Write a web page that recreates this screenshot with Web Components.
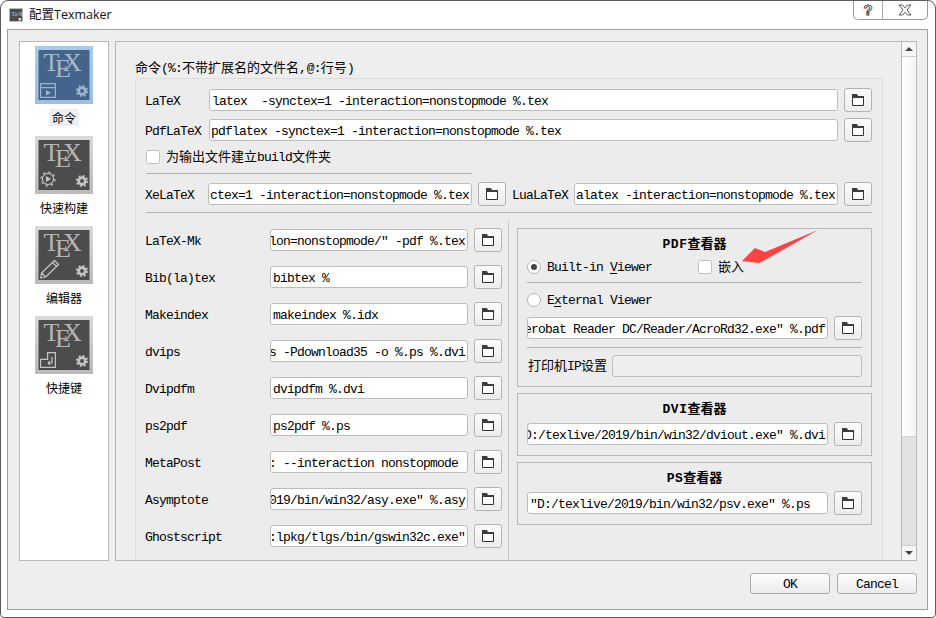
<!DOCTYPE html>
<html lang="zh">
<head>
<meta charset="utf-8">
<title>配置Texmaker</title>
<style>
  html, body { margin: 0; padding: 0; background: #fff; }
  body { width: 936px; height: 618px; overflow: hidden; font: 13px "Liberation Mono", "Noto Sans CJK SC", monospace; letter-spacing: -0.8px; color: #000; }
  u { text-underline-offset: 2px; }
</style>
</head>
<body>
<tm-window>
  <tm-titlebar slot="title">配置Texmaker</tm-titlebar>

  <tm-nav slot="nav" kind="run" selected>命令</tm-nav>
  <tm-nav slot="nav" kind="build">快速构建</tm-nav>
  <tm-nav slot="nav" kind="edit">编辑器</tm-nav>
  <tm-nav slot="nav" kind="keys">快捷键</tm-nav>

  <tm-page slot="page">
    <span slot="caption"><tm-cjk>命令</tm-cjk>(%:<tm-cjk>不带扩展名的文件名,</tm-cjk>@:<tm-cjk>行号</tm-cjk>)</span>

    <tm-field style="--label-w:64px"><span slot="label">LaTeX</span><span slot="lead">latex  -synctex=1 -interaction=nonstopmode %.tex</span></tm-field>
    <tm-field style="--label-w:64px;margin-top:6px" flush><span slot="label">PdfLaTeX</span><span slot="lead">pdflatex -synctex=1 -interaction=nonstopmode %.tex</span></tm-field>
    <tm-check style="margin:6px 0 0 1px"><tm-cjk>为输出文件建立</tm-cjk>build<tm-cjk>文件夹</tm-cjk></tm-check>
    <tm-rule style="width:326px;margin:7px 0 8px 1px"></tm-rule>
    <tm-pair>
      <tm-field slot="a" style="--label-w:63px" flush><span slot="label">XeLaTeX</span><span slot="lead">ctex=1 -interaction=nonstopmode %.tex</span></tm-field>
      <tm-field slot="b" style="--label-w:62px" flush><span slot="label">LuaLaTeX</span><span slot="lead">alatex -interaction=nonstopmode %.tex</span></tm-field>
    </tm-pair>
    <tm-rule style="margin:6px 0 8px 1px"></tm-rule>

    <tm-columns>
      <tm-field slot="left"><span slot="label">LaTeX-Mk</span><span slot="tail">lon=nonstopmode/" -pdf %.tex</span></tm-field>
      <tm-field slot="left"><span slot="label">Bib(la)tex</span><span slot="lead">bibtex %</span></tm-field>
      <tm-field slot="left"><span slot="label">Makeindex</span><span slot="lead">makeindex %.idx</span></tm-field>
      <tm-field slot="left"><span slot="label">dvips</span><span slot="tail">s -Pdownload35 -o %.ps %.dvi</span></tm-field>
      <tm-field slot="left"><span slot="label">Dvipdfm</span><span slot="lead">dvipdfm %.dvi</span></tm-field>
      <tm-field slot="left"><span slot="label">ps2pdf</span><span slot="lead">ps2pdf %.ps</span></tm-field>
      <tm-field slot="left"><span slot="label">MetaPost</span><span slot="tail">: --interaction nonstopmode </span></tm-field>
      <tm-field slot="left"><span slot="label">Asymptote</span><span slot="tail">019/bin/win32/asy.exe" %.asy</span></tm-field>
      <tm-field slot="left"><span slot="label">Ghostscript</span><span slot="tail">:lpkg/tlgs/bin/gswin32c.exe"</span></tm-field>

      <tm-group slot="right">
        <span slot="title">PDF<tm-cjk>查看器</tm-cjk></span>
        <tm-pair style="--a:171px;--gap:0px;margin-top:6px">
          <tm-radio slot="a" checked>Built-in <u>V</u>iewer</tm-radio>
          <tm-check slot="b"><tm-cjk>嵌入</tm-cjk></tm-check>
        </tm-pair>
        <tm-rule style="margin:6px 0 8px"></tm-rule>
        <tm-radio>E<u>x</u>ternal Viewer</tm-radio>
        <tm-field style="--label-w:0px;margin-top:7px"><span slot="tail">erobat Reader DC/Reader/AcroRd32.exe" %.pdf</span></tm-field>
        <tm-rule style="margin:7px 0"></tm-rule>
        <tm-printer><tm-cjk>打印机</tm-cjk>IP<tm-cjk>设置</tm-cjk></tm-printer>
      </tm-group>
      <tm-group slot="right">
        <span slot="title">DVI<tm-cjk>查看器</tm-cjk></span>
        <tm-field style="--label-w:0px"><span slot="tail">D:/texlive/2019/bin/win32/dviout.exe" %.dvi</span></tm-field>
      </tm-group>
      <tm-group slot="right">
        <span slot="title">PS<tm-cjk>查看器</tm-cjk></span>
        <tm-field style="--label-w:0px"><span slot="lead">"D:/texlive/2019/bin/win32/psv.exe" %.ps</span></tm-field>
      </tm-group>
    </tm-columns>
  </tm-page>

  <tm-button slot="actions">OK</tm-button>
  <tm-button slot="actions">Cancel</tm-button>
</tm-window>

<script>
function define(name, css, html, extra) {
  const template = document.createElement("template");
  template.innerHTML = `<style>${css}</style>${html}`;
  customElements.define(name, class extends HTMLElement {
    constructor() {
      super();
      this.attachShadow({ mode: "open" });
      this.shadowRoot.appendChild(template.content.cloneNode(true));
    }
    connectedCallback() {
      if (extra) extra(this);
    }
  });
}

define("tm-cjk", `:host { display: inline; font-size: 13px; letter-spacing: 0; line-height: 1; }`, `<slot></slot>`);

define("tm-window", `
  :host { display: block; position: relative; box-sizing: border-box; width: 936px; height: 618px;
    border: 1px solid #5c5c5c; border-radius: 8px 8px 4px 4px; background: #fff; overflow: hidden; }
  .frame { box-sizing: border-box; position: absolute; left: 6px; right: 7px; top: 28px; bottom: 7px;
    border: 1px solid #a0a0a0; background: #eeeeee; padding: 11px 10px 15px 11px;
    display: flex; flex-direction: column; gap: 12px; }
  .main { display: flex; gap: 6px; height: 520px; }
  .nav { box-sizing: border-box; width: 90px; background: #fff; border: 1px solid #b9b9b9; padding-top: 4px; }
  .page { flex: 1; min-width: 0; }
  .actions { display: flex; justify-content: flex-end; gap: 7px; }
  .arrow { position: absolute; left: -1px; top: -1px; pointer-events: none; }
`, `
  <slot name="title"></slot>
  <div class="frame">
    <div class="main">
      <div class="nav"><slot name="nav"></slot></div>
      <div class="page"><slot name="page"></slot></div>
    </div>
    <div class="actions"><slot name="actions"></slot></div>
  </div>
  <svg class="arrow" width="936" height="618"><polygon fill="#ff4141" points="742,261 755,248 765,252 818,230 772,256 759,263"/></svg>
`);

define("tm-titlebar", `
  :host { display: flex; align-items: flex-start; height: 28px; font: 12.5px "Open Sans", "Noto Sans CJK SC", sans-serif; letter-spacing: 0; color: #111; }
  .ico { margin: 7px 6px 0 8px; flex: none; }
  .txt { margin-top: 5px; line-height: 18px; flex: 1; }
  .btns { display: flex; box-sizing: border-box; width: 75px; height: 19px; margin: 0 7px 0 0; border: 1px solid #999; border-top: 0; border-radius: 0 0 5px 5px; }
  .btns div { display: flex; align-items: center; justify-content: center; }
  .help { width: 28px; border-right: 1px solid #aaa; }
  .close { flex: 1; }
`, `
  <svg class="ico" width="14" height="14" viewBox="0 0 14 14">
    <rect width="14" height="14" fill="#bcbcbc"/><rect x="1" y="1" width="12" height="12" fill="#4a4a4a"/>
    <text x="2" y="8" font-family="Liberation Serif" font-size="7" fill="#c8c8c8">TeX</text>
    <rect x="9.5" y="10" width="2.5" height="2.5" fill="#ddd"/>
  </svg>
  <div class="txt"><slot></slot></div>
  <div class="btns">
    <div class="help"><svg width="14" height="16" viewBox="0 0 14 16"><text x="7" y="13" text-anchor="middle" font-family="Liberation Sans" font-weight="700" font-size="15" fill="#fff" stroke="#444" stroke-width=".9">?</text></svg></div>
    <div class="close"><svg width="14" height="12" viewBox="0 0 14 12"><polygon fill="#fff" stroke="#555" points="1,1 4.5,1 7,3.8 9.5,1 13,1 9,6 13,11 9.5,11 7,8.2 4.5,11 1,11 5,6"/></svg></div>
  </div>
`);

const gear = c => `<circle cx="47" cy="45" r="3.3" fill="none" stroke="${c}" stroke-width="2.7"/><circle cx="47" cy="45" r="5.2" fill="none" stroke="${c}" stroke-width="1.8" stroke-dasharray="2 2.08"/>`;
const marks = {
  run: c => `<path fill="none" stroke="${c}" stroke-width="1.2" d="M5.6 37.6h14.8v13.8H5.6zM5.6 41.6h14.8"/><path fill="${c}" d="M11 44l5 2.8-5 2.8z"/>`,
  build: c => `<circle cx="13" cy="43" r="5.6" fill="none" stroke="${c}" stroke-width="1.1"/><circle cx="13" cy="43" r="7" fill="none" stroke="${c}" stroke-width="1.2" stroke-dasharray="2.4 3.1"/><path fill="${c}" d="M11 40l5 3-5 3z"/>`,
  edit: c => `<path fill="none" stroke="${c}" stroke-width="1.2" stroke-linejoin="round" d="M5.6 52l1-5L19.5 34.500l4 4L10.700 51zM6.800 47l4 4M17.500 36.500l4 4"/>`,
  keys: c => `<path fill="none" stroke="${c}" stroke-width="1.2" d="M12.600 36.600h7.800v14.800H5.600v-8h7zM13 47h4v-6M13 47l2-1.800M13 47l2 1.800"/>`
};

define("tm-nav", `
  :host { display: flex; flex-direction: column; align-items: center; height: 90px; font: 12px "Noto Sans CJK SC", sans-serif; letter-spacing: 0; }
  svg { display: block; flex: none; }
  .lbl { margin-top: 5px; height: 17px; line-height: 17px; padding: 0 3px; }
  :host([selected]) .lbl { background: #eeeeee; }
`, `<svg width="58" height="58" viewBox="0 0 58 58"></svg><div class="lbl"><slot></slot></div>`, el => {
  const on = el.hasAttribute("selected");
  const ink = on ? "#9db4cc" : "#c4c4c4";
  const letters = on ? "#a4b8cd" : "#b4b4b4";
  const id = "g" + el.getAttribute("kind");
  el.shadowRoot.querySelector("svg").innerHTML = `
    <defs><linearGradient id="${id}" x1="0" y1="0" x2="0" y2="1">
      <stop offset="0" stop-color="${on ? "#a9cbee" : "#d9dad9"}"/><stop offset="1" stop-color="${on ? "#9cbfe2" : "#b9bab9"}"/>
    </linearGradient></defs>
    <rect width="58" height="58" fill="url(#${id})"/>
    <rect x="3.500" y="4" width="51" height="50" fill="${on ? "#43658b" : "#4c4c4c"}"/>
    <text x="8.500 20 28" y="25 31 25" font-family="Liberation Serif" font-size="26" fill="${letters}">TEX</text>
    ${marks[el.getAttribute("kind")](ink)}${gear(ink)}`;
});

define("tm-page", `
  :host { display: flex; box-sizing: border-box; height: 520px; border: 1px solid #b5b5b5; border-right: 0; background: #eeeeee; overflow: hidden; }
  .view { flex: 1; min-width: 0; box-sizing: border-box; padding: 0 18px 0 19px; }
  .caption { height: 36px; box-sizing: border-box; padding-top: 17px; line-height: 19px; }
  .box { box-sizing: border-box; height: 600px; border: 1px solid #dcdcdc; border-radius: 2px; background: #ececec; padding: 9px 10px 0 9px; }
  .bar { box-sizing: border-box; width: 16px; flex: none; display: flex; flex-direction: column; border-left: 1px solid #b9b9b9; border-right: 1px solid #b9b9b9; background: #e2e2e2; }
  .end { height: 14px; flex: none; background: #f6f6f6; display: flex; align-items: center; justify-content: center; }
  .end.up { border-bottom: 1px solid #cfcfcf; }
  .end.down { border-top: 1px solid #cfcfcf; }
  .thumb { height: 379px; flex: none; background: linear-gradient(90deg, #fff, #f4f4f4); border-bottom: 1px solid #d4d4d4; }
  .rest { flex: 1; }
  i { width: 0; height: 0; border: 4px solid transparent; }
  .up i { border-bottom: 4px solid #444; border-top: 0; }
  .down i { border-top: 4px solid #444; border-bottom: 0; }
`, `
  <div class="view">
    <div class="caption"><slot name="caption"></slot></div>
    <div class="box"><slot></slot></div>
  </div>
  <div class="bar">
    <div class="end up"><i></i></div><div class="thumb"></div><div class="rest"></div><div class="end down"><i></i></div>
  </div>
`);

define("tm-browse", `
  :host { display: flex; flex: none; align-items: center; justify-content: center; box-sizing: border-box; width: 28px; height: 24px;
    border: 1px solid #b3b3b3; border-radius: 3px; background: linear-gradient(#fbfbfb, #ececec); }
`, `<svg width="12" height="12" viewBox="0 0 12 12"><path fill="#fff" stroke="#333" d="M.5 2.500h11v9H.5z"/><path fill="#3c3c3c" d="M0 0h5l1 2h6v2H0z"/></svg>`);

define("tm-field", `
  :host { display: flex; align-items: center; height: 24px; line-height: 15px; }
  .lbl { flex: none; width: var(--label-w, 125px); white-space: pre; padding-top: 2px; }
  .box { flex: 1; min-width: 0; box-sizing: border-box; height: 22px; margin-right: 6px; display: flex; align-items: center; overflow: hidden;
    padding: 2px 2px 0; border: 1px solid #bdbdbd; border-radius: 3px; background: #fff; white-space: pre; }
  :host([flush]) .box { padding: 2px 1px 0; }
  .box.tail { justify-content: flex-end; }
  .box span { flex: none; }
`, `
  <div class="lbl"><slot name="label"></slot></div>
  <div class="box"><span><slot name="lead"></slot></span><span><slot name="tail"></slot></span></div>
  <tm-browse></tm-browse>
`, el => {
  if (el.querySelector('[slot="tail"]')) el.shadowRoot.querySelector(".box").classList.add("tail");
});

define("tm-check", `
  :host { display: flex; align-items: center; height: 18px; gap: 6px; }
  i { flex: none; box-sizing: border-box; width: 14px; height: 14px; border: 1px solid #c4c4c4; border-radius: 2px; background: #fff; }
`, `<i></i><span><slot></slot></span>`);

define("tm-radio", `
  :host { display: flex; align-items: center; height: 18px; gap: 6px; }
  i { flex: none; display: flex; align-items: center; justify-content: center; box-sizing: border-box; width: 14px; height: 14px; border: 1px solid #b5b5b5; border-radius: 50%; background: #fff; }
  :host([checked]) i::after { content: ""; width: 6px; height: 6px; border-radius: 50%; background: #444; }
  span { padding-top: 1px; }
`, `<i></i><span><slot></slot></span>`);

define("tm-rule", `:host { display: block; height: 1px; background: #b4b4b4; }`, ``);

define("tm-pair", `
  :host { display: grid; grid-template-columns: var(--a, 361px) 1fr; column-gap: var(--gap, 6px); }
`, `<slot name="a"></slot><slot name="b"></slot>`);

define("tm-columns", `
  :host { display: flex; }
  .left { box-sizing: border-box; width: 364px; flex: none; padding: 7px 6px 0 0; border-right: 1px solid #c8c8c8; height: 340px; display: flex; flex-direction: column; gap: 13px; }
  .right { flex: 1; min-width: 0; padding: 7px 0 0 8px; display: flex; flex-direction: column; gap: 6px; }
`, `<div class="left"><slot name="left"></slot></div><div class="right"><slot name="right"></slot></div>`);

define("tm-group", `
  :host { display: block; box-sizing: border-box; border: 1px solid #b9b9b9; padding: 7px 9px 9px; }
  .ttl { box-sizing: border-box; height: 16px; line-height: 16px; margin-bottom: 5px; text-align: center; font-weight: 700; letter-spacing: .5px; padding-top: 1px; }
`, `<div class="ttl"><slot name="title"></slot></div><slot></slot>`);

define("tm-printer", `
  :host { display: flex; align-items: center; height: 22px; }
  .lbl { flex: none; width: 85px; padding-left: 1px; box-sizing: border-box; }
  .box { flex: 1; height: 22px; box-sizing: border-box; border: 1px solid #bdbdbd; border-radius: 3px; background: #eeeeee; }
`, `<div class="lbl"><slot></slot></div><div class="box"></div>`);

define("tm-button", `
  :host { display: flex; align-items: center; justify-content: center; box-sizing: border-box; width: 80px; height: 21px; padding-top: 1px;
    border: 1px solid #adadad; border-radius: 3px; background: linear-gradient(#fcfcfc, #ececec); line-height: 15px; }
`, `<slot></slot>`);
</script>
</body>
</html>
